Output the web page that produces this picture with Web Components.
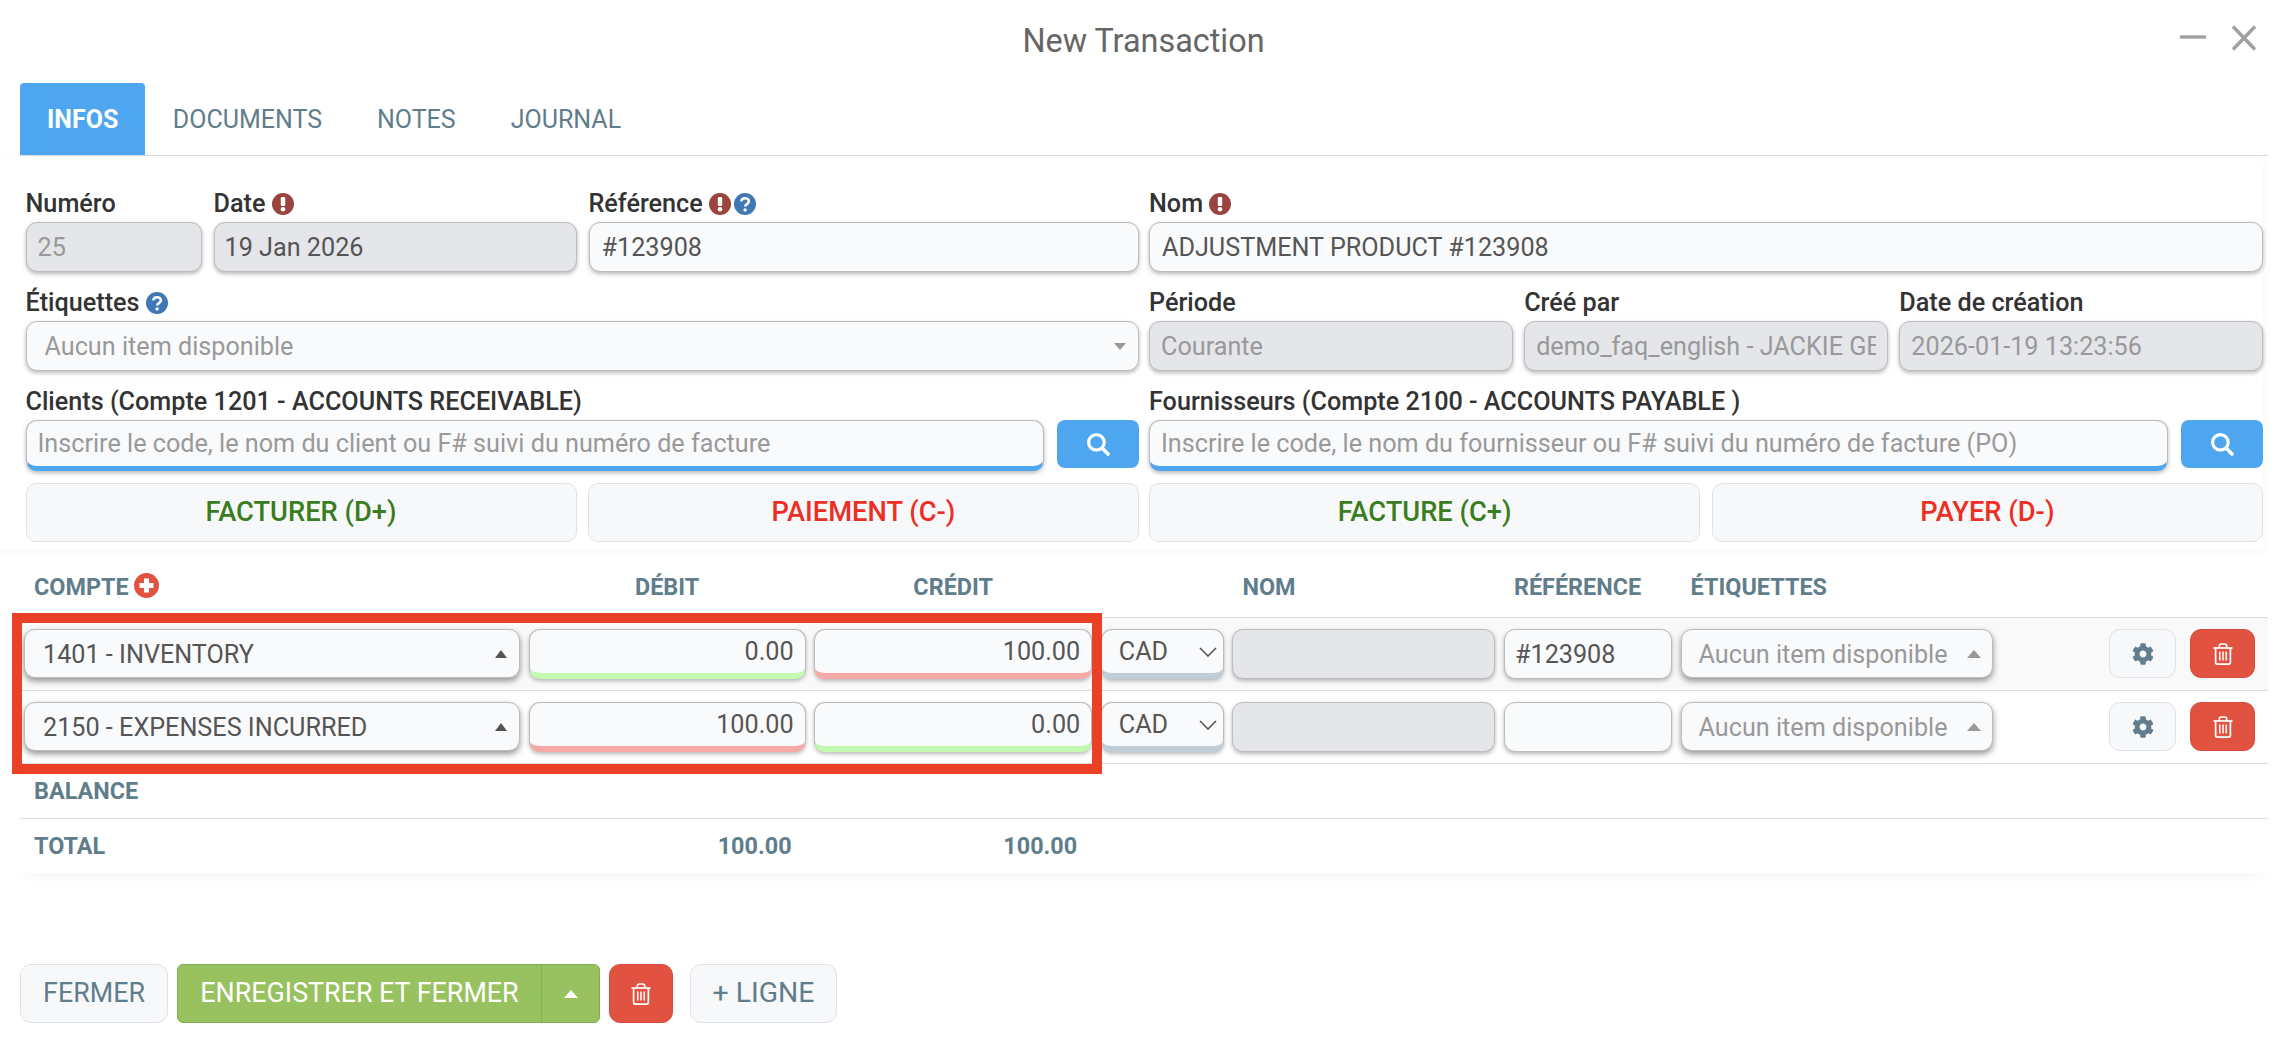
<!DOCTYPE html>
<html lang="fr"><head><meta charset="utf-8"><title>New Transaction</title>
<style>
html,body{margin:0;padding:0;background:#fff}
body{font-family:Roboto,"Liberation Sans",sans-serif}
</style></head>
<body>
<tx-app>
  <tx-titlebar>New Transaction</tx-titlebar>
  <tx-tabs>
    <tx-tab active>INFOS</tx-tab><tx-tab>DOCUMENTS</tx-tab><tx-tab>NOTES</tx-tab><tx-tab>JOURNAL</tx-tab>
  </tx-tabs>
  <tx-form>
    <tx-split>
      <tx-columns cols="176.5px 363.5px 1fr">
        <tx-field><span slot="label">Numéro</span><tx-control disabled muted>25</tx-control></tx-field>
        <tx-field><span slot="label">Date <tx-icon name="err"></tx-icon></span><tx-control pad="10" disabled>19 Jan 2026</tx-control></tx-field>
        <tx-field><span slot="label">Référence <tx-icon name="err"></tx-icon><tx-icon name="help" tight></tx-icon></span><tx-control pad="12">#123908</tx-control></tx-field>
      </tx-columns>
      <tx-field><span slot="label">Nom <tx-icon name="err"></tx-icon></span><tx-control pad="12">ADJUSTMENT PRODUCT #123908</tx-control></tx-field>
    </tx-split>
    <tx-split>
      <tx-field><span slot="label">Étiquettes <tx-icon name="help"></tx-icon></span><tx-control muted pad="18" caret="down">Aucun item disponible</tx-control></tx-field>
      <tx-columns cols="1fr 1fr 1fr">
        <tx-field><span slot="label">Période</span><tx-control disabled muted>Courante</tx-control></tx-field>
        <tx-field><span slot="label">Créé par</span><tx-control disabled muted>demo_faq_english - JACKIE GE</tx-control></tx-field>
        <tx-field><span slot="label">Date de création</span><tx-control disabled muted>2026-01-19 13:23:56</tx-control></tx-field>
      </tx-columns>
    </tx-split>
    <tx-split>
      <tx-field><span slot="label">Clients (Compte 1201 - ACCOUNTS RECEIVABLE)</span><tx-search>Inscrire le code, le nom du client ou F# suivi du numéro de facture</tx-search></tx-field>
      <tx-field><span slot="label">Fournisseurs (Compte 2100 - ACCOUNTS PAYABLE )</span><tx-search>Inscrire le code, le nom du fournisseur ou F# suivi du numéro de facture (PO)</tx-search></tx-field>
    </tx-split>
    <tx-split class="actions">
      <tx-columns cols="1fr 1fr"><tx-action tone="good">FACTURER (D+)</tx-action><tx-action tone="bad">PAIEMENT (C-)</tx-action></tx-columns>
      <tx-columns cols="1fr 1fr"><tx-action tone="good">FACTURE (C+)</tx-action><tx-action tone="bad">PAYER (D-)</tx-action></tx-columns>
    </tx-split>
  </tx-form>
  <tx-table>
    <tx-row kind="head">
      <tx-th>COMPTE <tx-icon name="plus"></tx-icon></tx-th><tx-th center>DÉBIT</tx-th><tx-th center>CRÉDIT</tx-th><tx-th></tx-th><tx-th>NOM</tx-th><tx-th>RÉFÉRENCE</tx-th><tx-th>ÉTIQUETTES</tx-th>
    </tx-row>
    <tx-row kind="line" shade>
      <tx-control strong pad="18" caret="up">1401 - INVENTORY</tx-control>
      <tx-control right under="green">0.00</tx-control>
      <tx-control right under="red">100.00</tx-control>
      <tx-control pad="17" caret="chev" under="slate">CAD</tx-control>
      <tx-control disabled></tx-control>
      <tx-control pad="10">#123908</tx-control>
      <tx-control strong muted pad="17" caret="up-gray">Aucun item disponible</tx-control>
      <tx-gap></tx-gap>
      <tx-btn icon="gear"></tx-btn><tx-btn danger icon="trash"></tx-btn>
    </tx-row>
    <tx-row kind="line">
      <tx-control strong pad="18" caret="up">2150 - EXPENSES INCURRED</tx-control>
      <tx-control right under="red">100.00</tx-control>
      <tx-control right under="green">0.00</tx-control>
      <tx-control pad="17" caret="chev" under="slate">CAD</tx-control>
      <tx-control disabled></tx-control>
      <tx-control pad="10"></tx-control>
      <tx-control strong muted pad="17" caret="up-gray">Aucun item disponible</tx-control>
      <tx-gap></tx-gap>
      <tx-btn icon="gear"></tx-btn><tx-btn danger icon="trash"></tx-btn>
    </tx-row>
    <tx-row kind="sum"><tx-th>BALANCE</tx-th></tx-row>
    <tx-row kind="sum"><tx-th>TOTAL</tx-th><tx-th end>100.00</tx-th><tx-th end class="cr">100.00</tx-th></tx-row>
  </tx-table>
  <tx-footer>
    <tx-btn wide style="--w:148px">FERMER</tx-btn>
    <tx-splitbtn>ENREGISTRER ET FERMER</tx-splitbtn>
    <tx-btn danger icon="trash" small></tx-btn>
    <tx-btn wide class="add" style="--w:147px;font-size:28.4px">+ LIGNE</tx-btn>
  </tx-footer>
  <tx-highlight></tx-highlight>
</tx-app>
<script>
const ICONS = {
  err:`<svg viewBox="0 0 22 22" width="22" height="22"><circle cx="11" cy="11" r="11" fill="#9a4440"/><rect x="8.8" y="4" width="4.4" height="9" rx="1.2" fill="#fff"/><circle cx="11" cy="16.2" r="2.3" fill="#fff"/></svg>`,
  help:`<svg viewBox="0 0 22 22" width="22" height="22"><circle cx="11" cy="11" r="11" fill="#3f78b5"/><path d="M7.2 8.4c.3-2.1 1.9-3.2 3.9-3.2 2.1 0 3.8 1.3 3.8 3.1 0 2.8-3.7 2.7-3.7 5.2" fill="none" stroke="#fff" stroke-width="2.6"/><circle cx="11.1" cy="16.9" r="1.7" fill="#fff"/></svg>`,
  plus:`<svg viewBox="0 0 25 25" width="25" height="25"><circle cx="12.5" cy="12.5" r="12.5" fill="#e15241"/><path d="M12.5 5.5v14M5.5 12.5h14" stroke="#fff" stroke-width="5"/></svg>`,
  search:`<svg viewBox="0 0 24 24" width="24" height="24"><circle cx="10.4" cy="10.4" r="7.8" fill="none" stroke="#fff" stroke-width="3.2"/><path d="M16 16l6 6" stroke="#fff" stroke-width="3.6" stroke-linecap="round"/></svg>`,
  gear:`<svg viewBox="0 0 512 512" width="22" height="22"><path fill="#627d8d" d="M487.4 315.7l-42.6-24.6c4.3-23.2 4.3-47 0-70.2l42.6-24.6c4.9-2.8 7.1-8.6 5.5-14-11.1-35.6-30-67.8-54.7-94.6-3.8-4.1-10-5.1-14.8-2.3L380.8 110c-17.9-15.4-38.5-27.3-60.8-35.1V25.8c0-5.6-3.9-10.5-9.4-11.7-36.7-8.2-74.3-7.8-109.2 0-5.5 1.2-9.4 6.1-9.4 11.7V75c-22.2 7.9-42.8 19.8-60.8 35.1L88.7 85.5c-4.9-2.8-11-1.9-14.8 2.3-24.7 26.7-43.6 58.9-54.7 94.6-1.7 5.4.6 11.2 5.5 14L67.3 221c-4.3 23.2-4.3 47 0 70.2l-42.6 24.6c-4.9 2.8-7.1 8.6-5.5 14 11.1 35.6 30 67.8 54.7 94.6 3.8 4.1 10 5.1 14.8 2.3l42.6-24.6c17.9 15.4 38.5 27.3 60.8 35.1v49.2c0 5.6 3.9 10.5 9.4 11.7 36.7 8.2 74.3 7.8 109.2 0 5.5-1.2 9.4-6.1 9.4-11.7v-49.2c22.2-7.9 42.8-19.8 60.8-35.1l42.6 24.6c4.9 2.8 11 1.9 14.8-2.3 24.7-26.7 43.6-58.9 54.7-94.6 1.5-5.5-.7-11.3-5.6-14.1zM256 336c-44.1 0-80-35.9-80-80s35.9-80 80-80 80 35.9 80 80-35.9 80-80 80z"/></svg>`,
  trash:`<svg viewBox="0 0 20 22" width="20" height="22" fill="none" stroke="#fff" stroke-width="1.7"><path d="M.5 5h19"/><path d="M6.3 5V3c0-1.2.8-2 2-2h3.4c1.2 0 2 .8 2 2v2"/><path d="M2.6 5v14.2c0 1.2.8 2 2 2h10.8c1.2 0 2-.8 2-2V5"/><path d="M6.8 8.5v9M10 8.5v9M13.2 8.5v9" stroke-width="1.5"/></svg>`
};
function make(name, css, html, init){
  customElements.define(name, class extends HTMLElement{
    constructor(){
      super();
      this.attachShadow({mode:'open'}).innerHTML = `<style>${css}</style>${html}`;
    }
    connectedCallback(){ if(init) init(this); }
  });
}
make('tx-app',`:host{display:block;position:relative;width:2284px;height:1040px;overflow:hidden;background:#fff;font-family:Roboto,"Liberation Sans",sans-serif}`,`<slot></slot>`);
make('tx-titlebar',`:host{display:grid;grid-template-columns:1fr auto 1fr;align-items:center;height:83px;padding-bottom:2px;box-sizing:border-box;color:#666;font-size:32.4px}
.m{padding-left:3px}
.ctl{display:flex;justify-content:flex-end;gap:26px;padding:0 28px 5px 0;align-items:center}
svg{display:block}`,`<span></span><span class="m"><slot></slot></span><span class="ctl">
<svg width="26" height="26" viewBox="0 0 26 26"><path d="M0 12h26" stroke="#a0a0a0" stroke-width="3.4"/></svg>
<svg width="24" height="26" viewBox="0 0 24 26"><path d="M1 1.5l22 23M23 1.5l-22 23" stroke="#a0a0a0" stroke-width="3.4"/></svg></span>`);
make('tx-tabs',`:host{display:flex;margin:0 16px 0 20px;border-bottom:1px solid #dedede;height:73px;box-sizing:border-box}`,`<slot></slot>`);
make('tx-tab',`:host{display:flex;align-items:center;padding:0 27.5px;color:#607d8b;font-size:25px;border-radius:4px 4px 0 0}
:host([active]){background:#4da6ef;color:#fff;font-weight:700;padding:0 27px}`,`<slot></slot>`);
make('tx-form',`:host{display:block;margin:0 21px 0 0;padding:28px 0 8px 25.5px;box-shadow:0 2px 10px rgba(0,0,0,.04)}`,`<slot></slot>`);
make('tx-split',`:host{display:grid;grid-template-columns:1fr 1114px;column-gap:10px;margin-bottom:11px}
:host(.actions){margin:12px 0 0}`,`<slot></slot>`);
make('tx-columns',`:host{display:grid;grid-template-columns:var(--cols);column-gap:11.5px}`,`<slot></slot>`,el=>el.style.setProperty('--cols',el.getAttribute('cols')));
make('tx-field',`:host{display:block;min-width:0}
.label{height:38px;display:flex;align-items:center;font-size:25.2px;font-weight:500;color:#333;white-space:nowrap}`,`<div class="label"><slot name="label"></slot></div><slot></slot>`);
make('tx-icon',`:host{display:inline-block;vertical-align:-3px;line-height:0;margin-left:0}
:host([tight]){margin-left:3px}`,`<span></span>`,el=>{
  el.shadowRoot.querySelector('span').innerHTML = ICONS[el.getAttribute('name')];
});
make('tx-control',`:host{display:flex;align-items:center;box-sizing:border-box;min-width:0;height:50px;background:#f9fafc;border:1px solid #bcbcbc;border-radius:11px;box-shadow:0 2px 4px rgba(0,0,0,.28);padding:0 var(--pad,11px);color:#555;font-size:25.2px;white-space:nowrap;overflow:hidden}
:host([disabled]){background:#e4e6e9}
:host([muted]){color:#999}
:host([strong]){box-shadow:0 3px 6px rgba(0,0,0,.42);height:49px;padding-top:1.5px}
:host([right]){justify-content:flex-end}
:host([under]){border-bottom-width:6px}
:host([under=green]){border-bottom-color:#c3fab1}
:host([under=red]){border-bottom-color:#f7aaa5}
:host([under=slate]){border-bottom-color:#c0ccd6}
.t{flex:1;overflow:hidden;min-width:0}
:host([right]) .t{flex:none}
.c{flex:none;margin-left:8px}
.down{border:6px solid transparent;border-top:7px solid #999;border-bottom:0;margin-right:-6px}
.up{border:6.5px solid transparent;border-bottom:8px solid #555;border-top:0;margin-right:-6px}
.up-gray{border:7px solid transparent;border-bottom:8px solid #999;border-top:0;margin-right:-6px}
.chev{margin-right:-11px}
svg{display:block}`,`<span class="t"><slot></slot></span><span class="c"></span>`,el=>{
  el.style.setProperty('--pad',(el.getAttribute('pad')||'11')+'px');
  const c=el.getAttribute('caret'), s=el.shadowRoot.querySelector('.c');
  if(c==='chev'){ s.className='c chev'; s.innerHTML='<svg width="18" height="10" viewBox="0 0 18 10"><path d="M1 1l8 8 8-8" fill="none" stroke="#555" stroke-width="1.6"/></svg>'; }
  else if(c) s.className='c '+c;
  else s.remove();
});
make('tx-search',`:host{display:grid;grid-template-columns:1fr 82px;column-gap:13px;align-items:start}
.i{box-sizing:border-box;height:51px;background:#f9fafc;border:1px solid #bcbcbc;border-bottom:5px solid #4da6ef;border-radius:11px;box-shadow:0 2px 4px rgba(0,0,0,.28);padding:0 11px;display:flex;align-items:center;color:#999;font-size:25.2px;white-space:nowrap;overflow:hidden}
.b{height:48px;background:#4da6ef;border-radius:8px;display:flex;align-items:center;justify-content:center}`,
`<div class="i"><slot></slot></div><div class="b">${ICONS.search}</div>`);
make('tx-action',`:host{display:flex;align-items:center;justify-content:center;box-sizing:border-box;height:59px;background:#f7f8fa;border:1px solid #e0e3e6;border-radius:10px;font-size:27.3px;font-weight:500;padding-bottom:2px}
:host([tone=good]){color:#3a7d1e}
:host([tone=bad]){color:#ee2e24}`,`<slot></slot>`);
make('tx-table',`:host{display:block;position:relative;background:#fff;margin:6px 16px 0 20px;box-shadow:0 8px 12px -6px rgba(0,0,0,.05)}`,`<slot></slot>`);
make('tx-row',`:host{display:grid;grid-template-columns:496px 277px 278px 123px 263px 168px 312px 1fr 72.4px 65px;column-gap:8.6px;align-items:center;box-sizing:border-box;padding:0 13px 0 4px}
:host([kind=head]){height:61px}
:host([kind=line]){height:73px;border-top:1px solid #dedede;padding-top:11px;align-items:start}
:host([kind=sum]){height:55px;border-top:1px solid #dedede}
:host([shade]){background:#f9f9f9}`,`<slot></slot>`);
make('tx-th',`:host{display:block;padding:0 10px;color:#607d8b;font-size:23.4px;font-weight:700;white-space:nowrap}
:host([center]){text-align:center}
:host([end]){text-align:right;padding-right:14px}
:host(.cr){padding-right:15px}`,`<slot></slot>`);
make('tx-gap',`:host{display:block}`,``);
make('tx-btn',`:host{display:flex;align-items:center;justify-content:center;box-sizing:border-box;height:49px;background:#f7f8fa;border:1px solid #dfe3e7;border-radius:11px;color:#607d8b;font-size:26.85px}
:host([icon=gear]){margin-right:5.4px}
:host([danger]){background:#e15241;border-color:#d84a3a}
:host([wide]){height:59px;width:var(--w);padding-bottom:1.5px}
:host([small]){height:59px;width:64px}
:host(.add){margin-left:8px}
svg{display:block}`,`<slot></slot><span class="i"></span>`,el=>{
  const n=el.getAttribute('icon'), s=el.shadowRoot.querySelector('.i');
  if(n) s.innerHTML=ICONS[n]; else s.remove();
});
make('tx-splitbtn',`:host{display:flex;box-sizing:border-box;width:423px;height:59px;background:#98c25f;border:1px solid #7cb052;border-radius:6px;color:#fff;font-size:26.85px;white-space:nowrap}
.a{display:flex;align-items:center;justify-content:center;width:364px;box-sizing:border-box;border-right:1px solid #86b152;padding-bottom:1.5px}
.b{display:flex;align-items:center;justify-content:center;flex:1}
.b i{border:7px solid transparent;border-bottom:8px solid #fff;border-top:0}`,`<div class="a"><slot></slot></div><div class="b"><i></i></div>`);
make('tx-footer',`:host{display:flex;gap:9px;margin:91px 0 0 20px;align-items:flex-start}`,`<slot></slot>`);
make('tx-highlight',`:host{position:absolute;left:12px;top:613px;width:1090px;height:161px;box-sizing:border-box;border:10px solid #ea4026;pointer-events:none}`,``);
</script>
</body></html>
